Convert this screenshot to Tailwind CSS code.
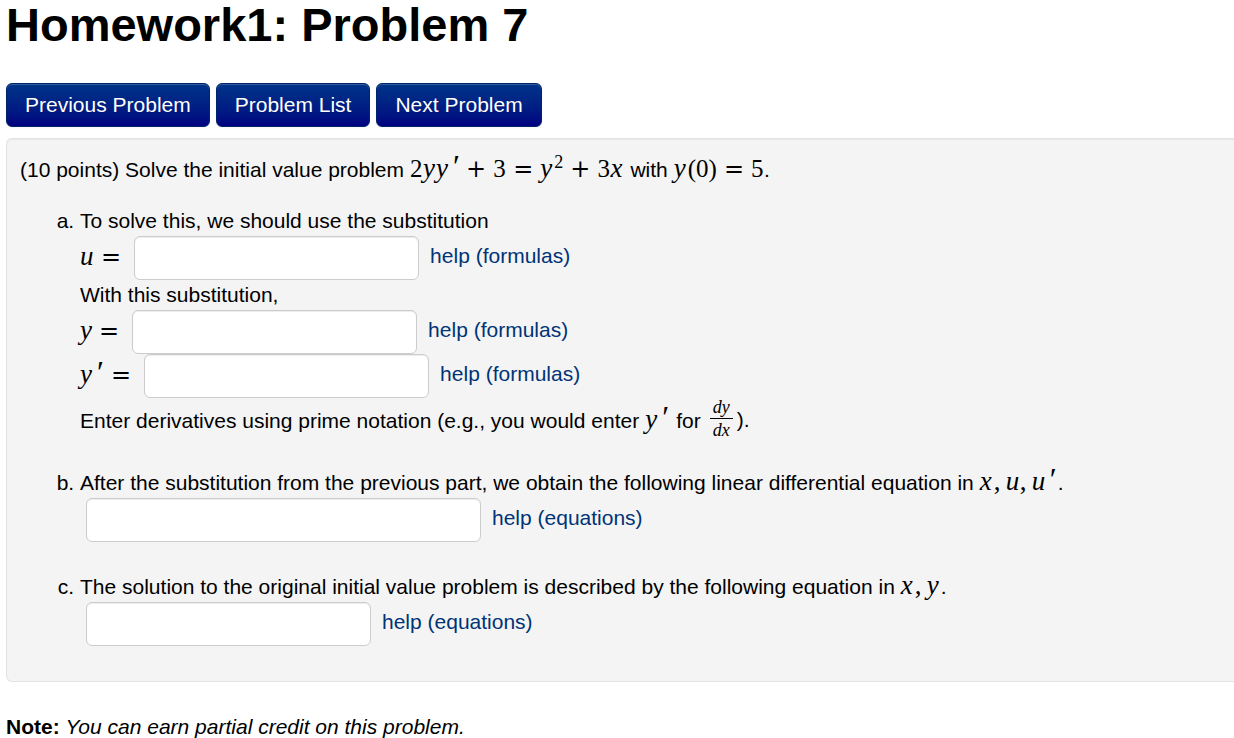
<!DOCTYPE html>
<html lang="en">

<head>
    <meta charset="UTF-8">
    <meta name="viewport" content="width=device-width, initial-scale=1.0">
    <title>Homework1: Problem 7</title>
    <script src="https://cdn.jsdelivr.net/npm/@tailwindcss/browser@4"></script>
</head>

<body class="bg-white pl-1.5 text-black text-[21px] leading-[30px] font-['Liberation_Sans',Arial,sans-serif]">
    <h1 class="text-[47px] leading-[50px] font-bold">Homework1: Problem 7</h1>

    <!-- Navigation -->
    <nav class="mt-[33px] flex flex-wrap gap-1.5">
        <button type="button" class="h-11 px-[18px] rounded-md border border-[#00246b] bg-linear-to-b from-[#003388] to-[#000080] text-white shadow-[inset_0_1px_0_rgba(255,255,255,0.2),0_1px_2px_rgba(0,0,0,0.05)] text-shadow-2xs">Previous Problem</button>
        <button type="button" class="h-11 px-[18px] rounded-md border border-[#00246b] bg-linear-to-b from-[#003388] to-[#000080] text-white shadow-[inset_0_1px_0_rgba(255,255,255,0.2),0_1px_2px_rgba(0,0,0,0.05)] text-shadow-2xs">Problem List</button>
        <button type="button" class="h-11 px-[18px] rounded-md border border-[#00246b] bg-linear-to-b from-[#003388] to-[#000080] text-white shadow-[inset_0_1px_0_rgba(255,255,255,0.2),0_1px_2px_rgba(0,0,0,0.05)] text-shadow-2xs">Next Problem</button>
    </nav>

    <!-- Problem body -->
    <main class="mt-[11px] pt-[15px] pb-[35px] pl-[13px] rounded-l-md border border-r-0 border-[#e3e3e3] bg-[#f4f4f4] shadow-[inset_0_1px_1px_rgba(0,0,0,0.05)]">
        <p class="flex flex-wrap items-baseline gap-x-1.5">
            <span>(10 points) Solve the initial value problem</span>
            <span class="inline-flex items-baseline h-7 text-[25px] leading-[28px] font-['Liberation_Serif',serif]">
                <span class="w-[13px]">2</span>
                <i class="w-[13px] text-[27px] leading-[26px]">y</i>
                <i class="w-[13px] text-[27px] leading-[26px]">y</i>
                <i class="w-2.5 pl-0.5 text-[32px] leading-[24px]">′</i>
                <span class="mx-[7px] text-2xl leading-[24px] font-['DejaVu_Serif',serif]">+</span>
                <span class="w-[13px]">3</span>
                <span class="mx-[7px] text-2xl leading-[24px] font-['DejaVu_Serif',serif]">=</span>
                <i class="w-[14px] text-[27px] leading-[26px]">y</i>
                <sup class="w-[9px] text-lg leading-none">2</sup>
                <span class="mx-[7px] text-2xl leading-[24px] font-['DejaVu_Serif',serif]">+</span>
                <span class="w-[13px]">3</span>
                <i class="w-[14px] text-[27px] leading-[26px]">x</i>
            </span>
            <span>with</span>
            <span class="inline-flex items-baseline h-7 text-[25px] leading-[28px] font-['Liberation_Serif',serif]">
                <i class="w-[14px] text-[27px] leading-[26px]">y</i>
                <span>(0)</span>
                <span class="mx-[7px] text-2xl leading-[24px] font-['DejaVu_Serif',serif]">=</span>
                <span class="w-[13px]">5</span>
                <span class="text-[21px] font-['Liberation_Sans',Arial,sans-serif]">.</span>
            </span>
        </p>

        <ol class="mt-[21px] pl-[60px] list-[lower-alpha]">
            <li>
                <p>To solve this, we should use the substitution</p>
                <div class="flex items-center h-11">
                    <label for="ansU" class="flex items-baseline h-[34px] text-[27px] leading-[30px] font-['Liberation_Serif',serif]">
                        <i class="w-[15px]">u</i>
                        <span class="ml-1.5 text-2xl leading-[24px] font-['DejaVu_Serif',serif]">=</span>
                    </label>
                    <input id="ansU" type="text" class="ml-[13px] w-[285px] h-11 px-2 rounded-md border border-[#ccc] bg-white shadow-[inset_0_1px_1px_rgba(0,0,0,0.075)]">
                    <a href="#" class="ml-[11px] pb-1 text-[#003377]">help (formulas)</a>
                </div>
                <p>With this substitution,</p>
                <div class="flex items-center h-11">
                    <label for="ansY" class="flex items-baseline h-[34px] text-[27px] leading-[30px] font-['Liberation_Serif',serif]">
                        <i class="w-[13px]">y</i>
                        <span class="ml-1.5 text-2xl leading-[24px] font-['DejaVu_Serif',serif]">=</span>
                    </label>
                    <input id="ansY" type="text" class="ml-[13px] w-[285px] h-11 px-2 rounded-md border border-[#ccc] bg-white shadow-[inset_0_1px_1px_rgba(0,0,0,0.075)]">
                    <a href="#" class="ml-[11px] pb-1 text-[#003377]">help (formulas)</a>
                </div>
                <div class="flex items-center h-11">
                    <label for="ansYPrime" class="flex items-baseline h-[34px] text-[27px] leading-[30px] font-['Liberation_Serif',serif]">
                        <i class="w-[13px]">y</i>
                        <i class="w-3 pl-0.5 text-[32px] leading-[24px]">′</i>
                        <span class="ml-1.5 text-2xl leading-[24px] font-['DejaVu_Serif',serif]">=</span>
                    </label>
                    <input id="ansYPrime" type="text" class="ml-[13px] w-[285px] h-11 px-2 rounded-md border border-[#ccc] bg-white shadow-[inset_0_1px_1px_rgba(0,0,0,0.075)]">
                    <a href="#" class="ml-[11px] pb-1 text-[#003377]">help (formulas)</a>
                </div>
                <div class="flex items-center h-11">
                    <p class="flex items-baseline gap-1.5">
                        <span>Enter derivatives using prime notation (e.g., you would enter</span>
                        <span class="inline-flex items-baseline h-7 text-[27px] leading-[26px] font-['Liberation_Serif',serif]">
                            <i class="w-[13px]">y</i>
                            <i class="w-3 pl-0.5 text-[32px] leading-[24px]">′</i>
                        </span>
                        <span>for</span>
                    </p>
                    <span class="ml-[9px] w-[23px] pb-1 flex flex-col text-center text-lg leading-[22px] italic font-['Liberation_Serif',serif]">
                        <span class="border-b border-black">dy</span>
                        <span>dx</span>
                    </span>
                    <span class="ml-1">).</span>
                </div>
            </li>

            <li class="mt-[25px]">
                <p class="flex flex-wrap items-baseline gap-x-1.5">
                    <span>After the substitution from the previous part, we obtain the following linear differential equation in</span>
                    <span class="inline-flex items-baseline h-7 text-[27px] leading-[26px] font-['Liberation_Serif',serif]">
                        <i class="w-[14px]">x</i>
                        <span class="w-3">,</span>
                        <i class="w-[14px]">u</i>
                        <span class="w-3">,</span>
                        <i class="w-[14px]">u</i>
                        <i class="w-3 pl-0.5 text-[32px] leading-[24px]">′</i>
                        <span class="text-[21px] font-['Liberation_Sans',Arial,sans-serif]">.</span>
                    </span>
                </p>
                <div class="flex items-center h-11">
                    <input id="ansB" type="text" aria-label="Answer for part b" class="ml-1.5 w-[395px] h-11 px-2 rounded-md border border-[#ccc] bg-white shadow-[inset_0_1px_1px_rgba(0,0,0,0.075)]">
                    <a href="#" class="ml-[11px] pb-1 text-[#003377]">help (equations)</a>
                </div>
            </li>

            <li class="mt-[30px]">
                <p class="flex flex-wrap items-baseline gap-x-1.5">
                    <span>The solution to the original initial value problem is described by the following equation in</span>
                    <span class="inline-flex items-baseline h-7 text-[27px] leading-[26px] font-['Liberation_Serif',serif]">
                        <i class="w-[14px]">x</i>
                        <span class="w-3">,</span>
                        <i class="w-[14px]">y</i>
                        <span class="text-[21px] font-['Liberation_Sans',Arial,sans-serif]">.</span>
                    </span>
                </p>
                <div class="flex items-center h-11">
                    <input id="ansC" type="text" aria-label="Answer for part c" class="ml-1.5 w-[285px] h-11 px-2 rounded-md border border-[#ccc] bg-white shadow-[inset_0_1px_1px_rgba(0,0,0,0.075)]">
                    <a href="#" class="ml-[11px] pb-1 text-[#003377]">help (equations)</a>
                </div>
            </li>
        </ol>
    </main>

    <p class="mt-[34px] leading-[22px]"><b>Note:</b> <i>You can earn partial credit on this problem.</i></p>
</body>

</html>
